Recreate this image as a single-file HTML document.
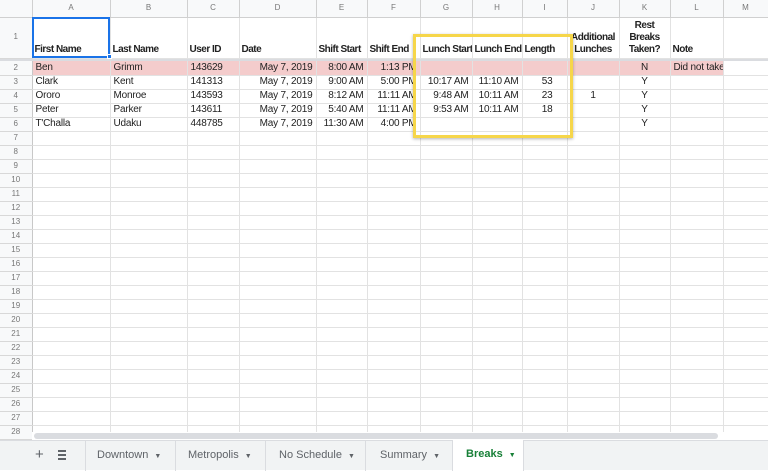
<!DOCTYPE html>
<html><head><style>
*{margin:0;padding:0;box-sizing:border-box}
body{width:768px;height:470px;overflow:hidden;background:#fff;font-family:"Liberation Sans",Arial,sans-serif;position:relative}
table{border-collapse:collapse;table-layout:fixed;position:absolute;left:0;top:0;width:768px}
td{border-right:1px solid #e2e2e2;border-bottom:1px solid #e2e2e2;font-size:10px;letter-spacing:-0.2px;color:#222;height:14px;padding:0 3px;white-space:nowrap;overflow:hidden;line-height:12px}
tr.h td{background:#f8f9fa;color:#777;font-size:8px;text-align:center;height:17px;border-color:#d0d0d0;letter-spacing:0}
td.rn{background:#f8f9fa;color:#777;font-size:8px;text-align:center;border-right:1px solid #c8c8c8;border-bottom-color:#d8d8d8;letter-spacing:0}
tr.r1 td{height:41px;vertical-align:bottom;font-weight:bold;padding-bottom:2px;letter-spacing:-0.5px;padding-left:2px;padding-right:2px}
tr.r1 td.rn{vertical-align:middle;font-weight:normal;letter-spacing:0}
tr.fz td{height:3px;background:#dadce0;border:none;padding:0}
tr.pk td{background:#f4cccc}
tr.pk td.rn{background:#f8f9fa}
.r{text-align:right}.c{text-align:center}
.tabs{position:absolute;left:0;top:440px;width:768px;height:30px;background:#f1f3f4;border-top:1px solid #dadce0}
.tab{position:absolute;top:0;height:30px;line-height:28px;font-size:11px;color:#5f6368;border-left:1px solid #dadce0}
.tab span{font-size:7px;margin-left:6px}
</style></head><body>
<table>
<colgroup><col style="width:32px"><col style="width:78px"><col style="width:77px"><col style="width:52px"><col style="width:77px"><col style="width:51px"><col style="width:53px"><col style="width:52px"><col style="width:50px"><col style="width:45px"><col style="width:52px"><col style="width:51px"><col style="width:53px"><col style="width:45px"></colgroup>
<tr class="h"><td></td><td>A</td><td>B</td><td>C</td><td>D</td><td>E</td><td>F</td><td>G</td><td>H</td><td>I</td><td>J</td><td>K</td><td>L</td><td>M</td></tr>
<tr class="r1"><td class="rn">1</td><td style="outline:2px solid #1a73e8;outline-offset:-2px">First Name</td><td>Last Name</td><td>User ID</td><td>Date</td><td>Shift Start</td><td>Shift End</td><td>Lunch Start</td><td>Lunch End</td><td>Length</td><td class="c" style="white-space:normal">Additional Lunches</td><td class="c" style="white-space:normal">Rest Breaks Taken?</td><td>Note</td><td></td></tr>
<tr class="fz"><td></td><td></td><td></td><td></td><td></td><td></td><td></td><td></td><td></td><td></td><td></td><td></td><td></td><td></td></tr>
<tr class="pk"><td class="rn">2</td><td>Ben</td><td>Grimm</td><td>143629</td><td class="r">May 7, 2019</td><td class="r">8:00 AM</td><td class="r">1:13 PM</td><td></td><td></td><td></td><td></td><td class="c">N</td><td>Did not take</td><td style="background:#fff"></td></tr>
<tr><td class="rn">3</td><td>Clark</td><td>Kent</td><td>141313</td><td class="r">May 7, 2019</td><td class="r">9:00 AM</td><td class="r">5:00 PM</td><td class="r">10:17 AM</td><td class="r">11:10 AM</td><td class="r" style="padding-right:14px">53</td><td></td><td class="c">Y</td><td></td><td></td></tr>
<tr><td class="rn">4</td><td>Ororo</td><td>Monroe</td><td>143593</td><td class="r">May 7, 2019</td><td class="r">8:12 AM</td><td class="r">11:11 AM</td><td class="r">9:48 AM</td><td class="r">10:11 AM</td><td class="r" style="padding-right:14px">23</td><td class="c">1</td><td class="c">Y</td><td></td><td></td></tr>
<tr><td class="rn">5</td><td>Peter</td><td>Parker</td><td>143611</td><td class="r">May 7, 2019</td><td class="r">5:40 AM</td><td class="r">11:11 AM</td><td class="r">9:53 AM</td><td class="r">10:11 AM</td><td class="r" style="padding-right:14px">18</td><td></td><td class="c">Y</td><td></td><td></td></tr>
<tr><td class="rn">6</td><td>T'Challa</td><td>Udaku</td><td>448785</td><td class="r">May 7, 2019</td><td class="r">11:30 AM</td><td class="r">4:00 PM</td><td></td><td></td><td></td><td></td><td class="c">Y</td><td></td><td></td></tr>
<tr><td class="rn">7</td><td></td><td></td><td></td><td></td><td></td><td></td><td></td><td></td><td></td><td></td><td></td><td></td><td></td></tr>
<tr><td class="rn">8</td><td></td><td></td><td></td><td></td><td></td><td></td><td></td><td></td><td></td><td></td><td></td><td></td><td></td></tr>
<tr><td class="rn">9</td><td></td><td></td><td></td><td></td><td></td><td></td><td></td><td></td><td></td><td></td><td></td><td></td><td></td></tr>
<tr><td class="rn">10</td><td></td><td></td><td></td><td></td><td></td><td></td><td></td><td></td><td></td><td></td><td></td><td></td><td></td></tr>
<tr><td class="rn">11</td><td></td><td></td><td></td><td></td><td></td><td></td><td></td><td></td><td></td><td></td><td></td><td></td><td></td></tr>
<tr><td class="rn">12</td><td></td><td></td><td></td><td></td><td></td><td></td><td></td><td></td><td></td><td></td><td></td><td></td><td></td></tr>
<tr><td class="rn">13</td><td></td><td></td><td></td><td></td><td></td><td></td><td></td><td></td><td></td><td></td><td></td><td></td><td></td></tr>
<tr><td class="rn">14</td><td></td><td></td><td></td><td></td><td></td><td></td><td></td><td></td><td></td><td></td><td></td><td></td><td></td></tr>
<tr><td class="rn">15</td><td></td><td></td><td></td><td></td><td></td><td></td><td></td><td></td><td></td><td></td><td></td><td></td><td></td></tr>
<tr><td class="rn">16</td><td></td><td></td><td></td><td></td><td></td><td></td><td></td><td></td><td></td><td></td><td></td><td></td><td></td></tr>
<tr><td class="rn">17</td><td></td><td></td><td></td><td></td><td></td><td></td><td></td><td></td><td></td><td></td><td></td><td></td><td></td></tr>
<tr><td class="rn">18</td><td></td><td></td><td></td><td></td><td></td><td></td><td></td><td></td><td></td><td></td><td></td><td></td><td></td></tr>
<tr><td class="rn">19</td><td></td><td></td><td></td><td></td><td></td><td></td><td></td><td></td><td></td><td></td><td></td><td></td><td></td></tr>
<tr><td class="rn">20</td><td></td><td></td><td></td><td></td><td></td><td></td><td></td><td></td><td></td><td></td><td></td><td></td><td></td></tr>
<tr><td class="rn">21</td><td></td><td></td><td></td><td></td><td></td><td></td><td></td><td></td><td></td><td></td><td></td><td></td><td></td></tr>
<tr><td class="rn">22</td><td></td><td></td><td></td><td></td><td></td><td></td><td></td><td></td><td></td><td></td><td></td><td></td><td></td></tr>
<tr><td class="rn">23</td><td></td><td></td><td></td><td></td><td></td><td></td><td></td><td></td><td></td><td></td><td></td><td></td><td></td></tr>
<tr><td class="rn">24</td><td></td><td></td><td></td><td></td><td></td><td></td><td></td><td></td><td></td><td></td><td></td><td></td><td></td></tr>
<tr><td class="rn">25</td><td></td><td></td><td></td><td></td><td></td><td></td><td></td><td></td><td></td><td></td><td></td><td></td><td></td></tr>
<tr><td class="rn">26</td><td></td><td></td><td></td><td></td><td></td><td></td><td></td><td></td><td></td><td></td><td></td><td></td><td></td></tr>
<tr><td class="rn">27</td><td></td><td></td><td></td><td></td><td></td><td></td><td></td><td></td><td></td><td></td><td></td><td></td><td></td></tr>
<tr><td class="rn">28</td><td></td><td></td><td></td><td></td><td></td><td></td><td></td><td></td><td></td><td></td><td></td><td></td><td></td></tr>
</table>
<div style="position:absolute;left:413px;top:34px;width:160px;height:104px;border:3px solid #f6d64a;box-shadow:0 1px 3px rgba(0,0,0,.3)"></div>
<div style="position:absolute;left:107px;top:54px;width:5px;height:5px;background:#1a73e8;border:1px solid #fff"></div>
<div style="position:absolute;left:32px;top:432px;width:736px;height:9px;background:#fff"></div>
<div style="position:absolute;left:34px;top:433px;width:684px;height:6px;border-radius:3px;background:#dadce0"></div>
<div class="tabs">
<div style="position:absolute;left:35px;top:5px;font-size:15px;color:#5f6368">+</div>
<div style="position:absolute;left:58px;top:9px;width:8px;height:10px;border-top:2px solid #5f6368;border-bottom:2px solid #5f6368"><div style="margin-top:2px;height:2px;background:#5f6368"></div></div>
<div class="tab" style="left:85px;width:90px;padding-left:11px">Downtown<span>▼</span></div>
<div class="tab" style="left:175px;width:90px;padding-left:12px">Metropolis<span>▼</span></div>
<div class="tab" style="left:265px;width:100px;padding-left:13px">No Schedule<span>▼</span></div>
<div class="tab" style="left:365px;width:87px;padding-left:14px">Summary<span>▼</span></div>
<div class="tab" style="left:452px;width:71px;padding-left:13px;background:#fff;color:#188038;font-weight:bold;top:-1px;height:31px">Breaks<span>▼</span></div>
<div class="tab" style="left:523px;width:1px"></div>
</div>
</body></html>
